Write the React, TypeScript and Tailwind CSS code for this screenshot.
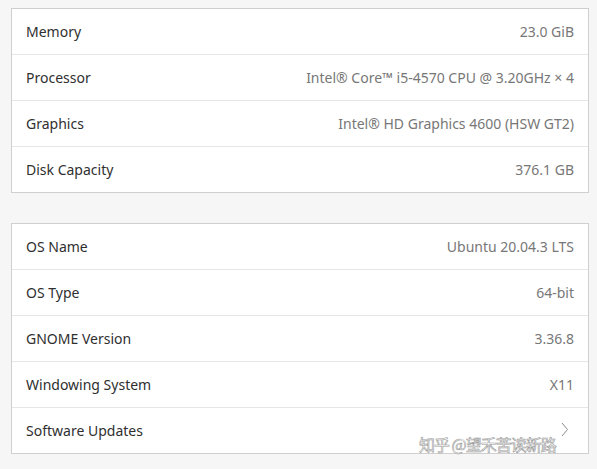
import { ReactNode } from "react";

type Row = { label: string; value?: ReactNode };

const hardware: Row[] = [
  { label: "Memory", value: "23.0 GiB" },
  { label: "Processor", value: "Intel® Core™ i5-4570 CPU @ 3.20GHz × 4" },
  { label: "Graphics", value: "Intel® HD Graphics 4600 (HSW GT2)" },
  { label: "Disk Capacity", value: "376.1 GB" },
];

const system: Row[] = [
  { label: "OS Name", value: "Ubuntu 20.04.3 LTS" },
  { label: "OS Type", value: "64-bit" },
  { label: "GNOME Version", value: "3.36.8" },
  { label: "Windowing System", value: "X11" },
];

function InfoRow({ label, value }: Row) {
  return (
    <div className="box-content flex h-[45px] items-center justify-between px-[14px]">
      <span className="text-[14px] text-[#2f2f2f]">{label}</span>
      <span className="text-[14px] text-[#777777]">{value}</span>
    </div>
  );
}

function Card({ children }: { children: ReactNode }) {
  return (
    <div className="ml-[11px] w-[578px] divide-y divide-[#e6e6e6] border border-[#cfcfcf] bg-white">
      {children}
    </div>
  );
}

export default function App() {
  return (
    <div
      className="relative h-[469px] w-[597px] overflow-hidden bg-[#f6f6f6] pt-[8px]"
      style={{ fontFamily: '"Noto Sans", "Open Sans", sans-serif' }}
    >
      <Card>
        {hardware.map((r) => (
          <InfoRow key={r.label} {...r} />
        ))}
      </Card>

      <div className="mt-[30px]">
        <Card>
          {system.map((r) => (
            <InfoRow key={r.label} {...r} />
          ))}
          <div className="box-content flex h-[45px] items-center justify-between px-[14px]">
            <span className="text-[14px] text-[#2f2f2f]">Software Updates</span>
            <svg width="8" height="15" viewBox="0 0 8 15" className="-mt-[3px] mr-[5px]">
              <path d="M1 1 L6.5 7.5 L1 14" fill="none" stroke="#8a8a8a" strokeWidth="1" />
            </svg>
          </div>
        </Card>
      </div>

      {/* watermark */}
      <div
        className="absolute left-[419px] top-[435px] whitespace-nowrap text-[16px] leading-[18px] tracking-[-1px] text-white [-webkit-text-stroke:0.6px_#9a9a9a]"
        style={{ fontFamily: '"Noto Sans CJK SC", sans-serif' }}
      >
        知乎 @望禾苦读新路
      </div>
    </div>
  );
}
